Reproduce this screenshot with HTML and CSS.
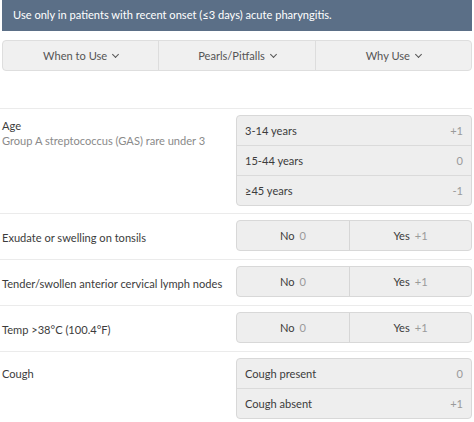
FILE: index.html
```html
<!DOCTYPE html>
<html>
  <head>
    <title>Centor Score</title>
    <link rel="stylesheet" href="styles.css">
  </head>
  <body>
    <div class="page">
      <div class="banner">Use only in patients with recent onset (≤3 days) acute pharyngitis.</div>

      <div class="tabs">
        <div class="tab">When to Use <span class="chev"></span></div>
        <div class="tab">Pearls/Pitfalls <span class="chev"></span></div>
        <div class="tab">Why Use <span class="chev"></span></div>
      </div>

      <div class="rows">
        <div class="row">
          <div class="label">
            <div>Age</div>
            <div class="sub">Group A streptococcus (GAS) rare under 3</div>
          </div>
          <div class="choices stack">
            <div class="opt"><span>3-14 years</span><span class="pts">+1</span></div>
            <div class="opt"><span>15-44 years</span><span class="pts">0</span></div>
            <div class="opt"><span>≥45 years</span><span class="pts">-1</span></div>
          </div>
        </div>

        <div class="row mid">
          <div class="label">Exudate or swelling on tonsils</div>
          <div class="choices pair">
            <div class="opt no">No <span class="pts">0</span></div>
            <div class="opt yes">Yes <span class="pts">+1</span></div>
          </div>
        </div>

        <div class="row mid">
          <div class="label">Tender/swollen anterior cervical lymph nodes</div>
          <div class="choices pair">
            <div class="opt no">No <span class="pts">0</span></div>
            <div class="opt yes">Yes <span class="pts">+1</span></div>
          </div>
        </div>

        <div class="row mid">
          <div class="label">Temp &gt;38°C (100.4°F)</div>
          <div class="choices pair">
            <div class="opt no">No <span class="pts">0</span></div>
            <div class="opt yes">Yes <span class="pts">+1</span></div>
          </div>
        </div>

        <div class="row">
          <div class="label cough">Cough</div>
          <div class="choices stack">
            <div class="opt"><span>Cough present</span><span class="pts">0</span></div>
            <div class="opt"><span>Cough absent</span><span class="pts">+1</span></div>
          </div>
        </div>
      </div>
    </div>
  </body>
</html>
```

FILE: styles.css
```css
body {
  margin: 0;
  background: #fff;
  font-family: Lato, "Noto Sans", sans-serif;
  font-size: 11.1px;
  line-height: 15px;
  color: #3c3c3c;
}

.page {
  width: 470px;
  padding: 0 2px;
}

.banner {
  background: #5b6f87;
  color: #fff;
  height: 31px;
  line-height: 30px;
  padding: 0 11px;
  box-sizing: border-box;
  white-space: nowrap;
}

.tabs {
  display: flex;
  margin-top: 9px;
  height: 31px;
  box-sizing: border-box;
  border: 1px solid #dedede;
  border-radius: 4px;
  background: #f0f0f0;
}

.tab {
  flex: 1;
  display: flex;
  align-items: center;
  justify-content: center;
  gap: 6px;
  color: #555;
}

.tab + .tab {
  border-left: 1px solid #dddddd;
}

.chev {
  width: 4px;
  height: 4px;
  border-right: 1.6px solid #555;
  border-bottom: 1.6px solid #555;
  transform: rotate(45deg);
  margin-top: -3px;
}

.rows {
  margin-top: 37px;
  margin-left: -2px;
}

.row {
  display: flex;
  justify-content: space-between;
  border-top: 1px solid #ebebeb;
  padding: 6px 0 7px 2px;
}

.row.mid {
  align-items: center;
  padding-bottom: 8px;
}

.label {
  padding-top: 3px;
  color: #3c3c3c;
  white-space: nowrap;
}

.label.cough {
  padding-top: 8px;
}

.sub {
  color: #8a8a8a;
}

.choices {
  flex-shrink: 0;
  width: 236px;
  box-sizing: border-box;
  border: 1px solid #d8d8d8;
  border-radius: 4px;
  background: #eeeeee;
  overflow: hidden;
}

.stack .opt {
  display: flex;
  justify-content: space-between;
  align-items: center;
  height: 29px;
  padding: 0 8px;
}

.stack .opt + .opt {
  border-top: 1px solid #dadada;
}

.pair {
  display: flex;
  height: 31px;
}

.pair .opt {
  display: flex;
  align-items: center;
  justify-content: center;
  gap: 5px;
}

.pair .no {
  width: 112px;
}

.pair .yes {
  flex: 1;
  border-left: 1px solid #d6d6d6;
}

.pts {
  color: #9a9a9a;
}
```
